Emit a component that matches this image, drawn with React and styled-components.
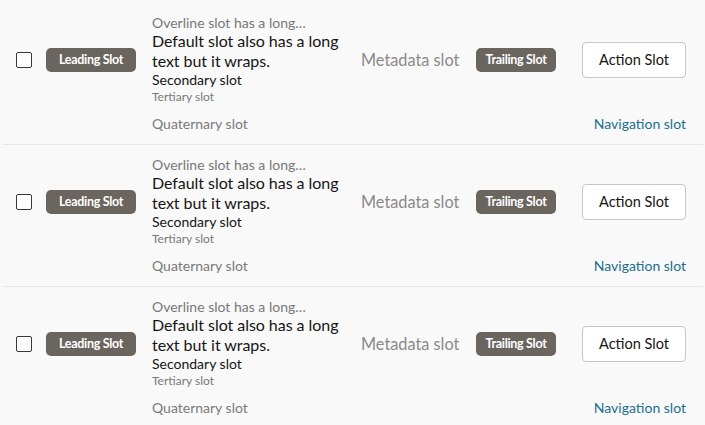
import React from "react";
import styled, { createGlobalStyle } from "styled-components";

const Global = createGlobalStyle`
  html, body { margin: 0; padding: 0; background: #f9f9f9; }
  body { font-family: Lato, "Noto Sans", sans-serif; color: #161513; }
`;

const List = styled.ul`
  list-style: none;
  margin: 0;
  padding: 3px 0 0;
`;

const Row = styled.li`
  display: grid;
  grid-template-columns: 14px 90px 193px minmax(0, 1fr) 90px 104px;
  grid-template-rows: auto auto;
  column-gap: 16px;
  row-gap: 9px;
  align-items: center;
  height: 142px;
  box-sizing: border-box;
  padding: 11px 17px 12px 14px;
  margin: 0 2px;
  border-bottom: 1px solid ${(p) => (p.$last ? "transparent" : "#e8e8e8")};
`;

const Check = styled.span`
  width: 16px;
  height: 16px;
  box-sizing: border-box;
  border: 1.5px solid #3a3835;
  border-radius: 2px;
  background: #fff;
`;

const Badge = styled.span`
  justify-self: start;
  display: inline-flex;
  align-items: center;
  justify-content: center;
  height: 24px;
  width: ${(p) => p.$w}px;
  border-radius: 5px;
  background: #6b6560;
  color: #fff;
  font-size: 12.5px;
  font-weight: 700;
  letter-spacing: -0.3px;
`;

const TextCol = styled.div`
  display: flex;
  flex-direction: column;
  min-width: 0;
`;

const Overline = styled.div`
  font-size: 14px;
  line-height: 16px;
  color: #787878;
  white-space: nowrap;
  overflow: hidden;
  text-overflow: ellipsis;
`;

const Primary = styled.div`
  font-size: 16px;
  line-height: 20px;
  letter-spacing: -0.05px;
  color: #161513;
`;

const Secondary = styled.div`
  font-size: 14px;
  line-height: 17px;
  color: #161513;
`;

const Tertiary = styled.div`
  font-size: 12px;
  line-height: 17px;
  color: #787878;
`;

const Metadata = styled.div`
  font-size: 16.3px;
  color: #8a8a8a;
  white-space: nowrap;
`;

const ActionButton = styled.button`
  height: 36px;
  width: 104px;
  border: 1px solid #c6c6c6;
  border-radius: 4px;
  background: #fff;
  font-family: inherit;
  font-size: 14.5px;
  color: #161513;
`;

const Quaternary = styled.div`
  grid-column: 3;
  font-size: 14px;
  line-height: 17px;
  color: #7a7a7a;
`;

const NavLink = styled.a`
  grid-column: 4 / 7;
  justify-self: end;
  font-size: 14px;
  line-height: 17px;
  color: #1b6e8e;
  text-decoration: none;
`;

function Item({ last }) {
  return (
    <Row $last={last}>
      <Check />
      <Badge $w={90}>Leading Slot</Badge>
      <TextCol>
        <Overline>Overline slot has a long…</Overline>
        <Primary>Default slot also has a long text but it wraps.</Primary>
        <Secondary>Secondary slot</Secondary>
        <Tertiary>Tertiary slot</Tertiary>
      </TextCol>
      <Metadata>Metadata slot</Metadata>
      <Badge $w={80}>Trailing Slot</Badge>
      <ActionButton>Action Slot</ActionButton>
      <Quaternary>Quaternary slot</Quaternary>
      <NavLink href="#">Navigation slot</NavLink>
    </Row>
  );
}

export default function App() {
  return (
    <>
      <Global />
      <List>
        <Item />
        <Item />
        <Item last />
      </List>
    </>
  );
}
